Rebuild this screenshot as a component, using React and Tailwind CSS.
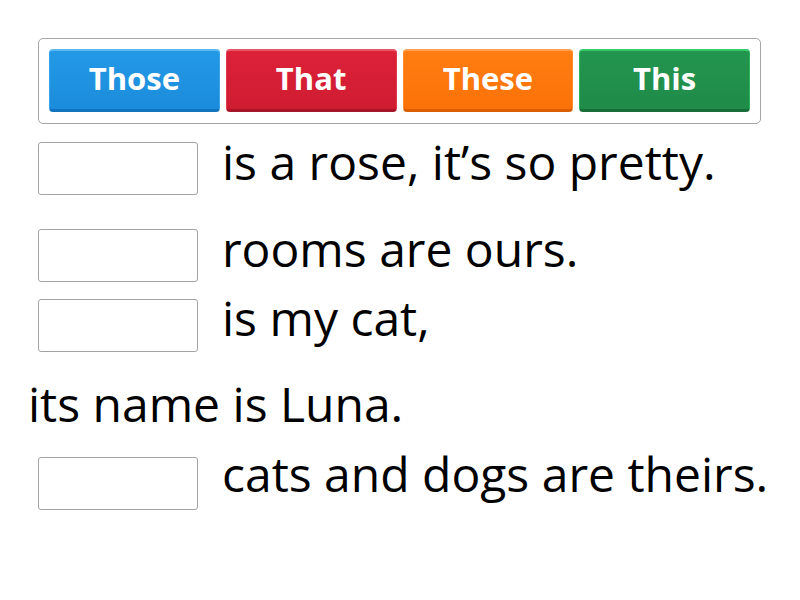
import React from 'react';

const words = [
  { label: 'Those', cls: 'bg-gradient-to-b from-[#2399e6] to-[#1b8cdb] border-t-[#5bb8f2] border-x-[#3aa5ec] border-b-[#1272bd]' },
  { label: 'That', cls: 'bg-gradient-to-b from-[#dc2139] to-[#cf1c31] border-t-[#e85468] border-x-[#e03a4e] border-b-[#a8142a]' },
  { label: 'These', cls: 'bg-gradient-to-b from-[#ff7d12] to-[#fb7208] border-t-[#ffa050] border-x-[#ff8a2c] border-b-[#d95f00]' },
  { label: 'This', cls: 'bg-gradient-to-b from-[#23954f] to-[#1f8c49] border-t-[#34c96a] border-x-[#2cb45d] border-b-[#176e39]' },
];

const Blank = () => (
  <div className="w-[160px] h-[53px] shrink-0 bg-white border border-[#a3a3a3] rounded-[3px]" />
);

const Line = ({ children, className = '' }) => (
  <span className={`text-[48px] leading-[40px] text-black whitespace-nowrap ${className}`}>{children}</span>
);

export default function App() {
  return (
    <div className="w-[800px] h-[600px] bg-white overflow-hidden font-['Open_Sans',sans-serif]">
      <div className="pt-[38px] pl-[38px]">
        {/* word bank */}
        <div className="w-[723px] h-[86px] border border-[#a6a6a6] rounded-[5px] px-[10px] pt-[10px] flex gap-[6px]">
          {words.map(w => (
            <div
              key={w.label}
              className={`w-[171px] h-[63px] rounded-[4px] border-t-2 border-x border-b-[3px] flex items-center justify-center pb-[3px] ${w.cls}`}
            >
              <span className="text-white font-bold text-[31px] leading-none">{w.label}</span>
            </div>
          ))}
        </div>

        {/* sentences */}
        <div className="flex flex-col">
          <div className="flex items-start gap-[24px] mt-[18px]">
            <Blank />
            <Line>is a rose, it’s so pretty.</Line>
          </div>
          <div className="flex items-start gap-[24px] mt-[34px]">
            <Blank />
            <Line>rooms are ours.</Line>
          </div>
          <div className="flex items-start gap-[24px] mt-[17px]">
            <Blank />
            <Line className="-mt-[1px]">is my cat,</Line>
          </div>
          <Line className="mt-[32px] -ml-[10px]">its name is Luna.</Line>
          <div className="flex items-start gap-[24px] mt-[33px]">
            <Blank />
            <Line className="-mt-[3px]">cats and dogs are theirs.</Line>
          </div>
        </div>
      </div>
    </div>
  );
}
